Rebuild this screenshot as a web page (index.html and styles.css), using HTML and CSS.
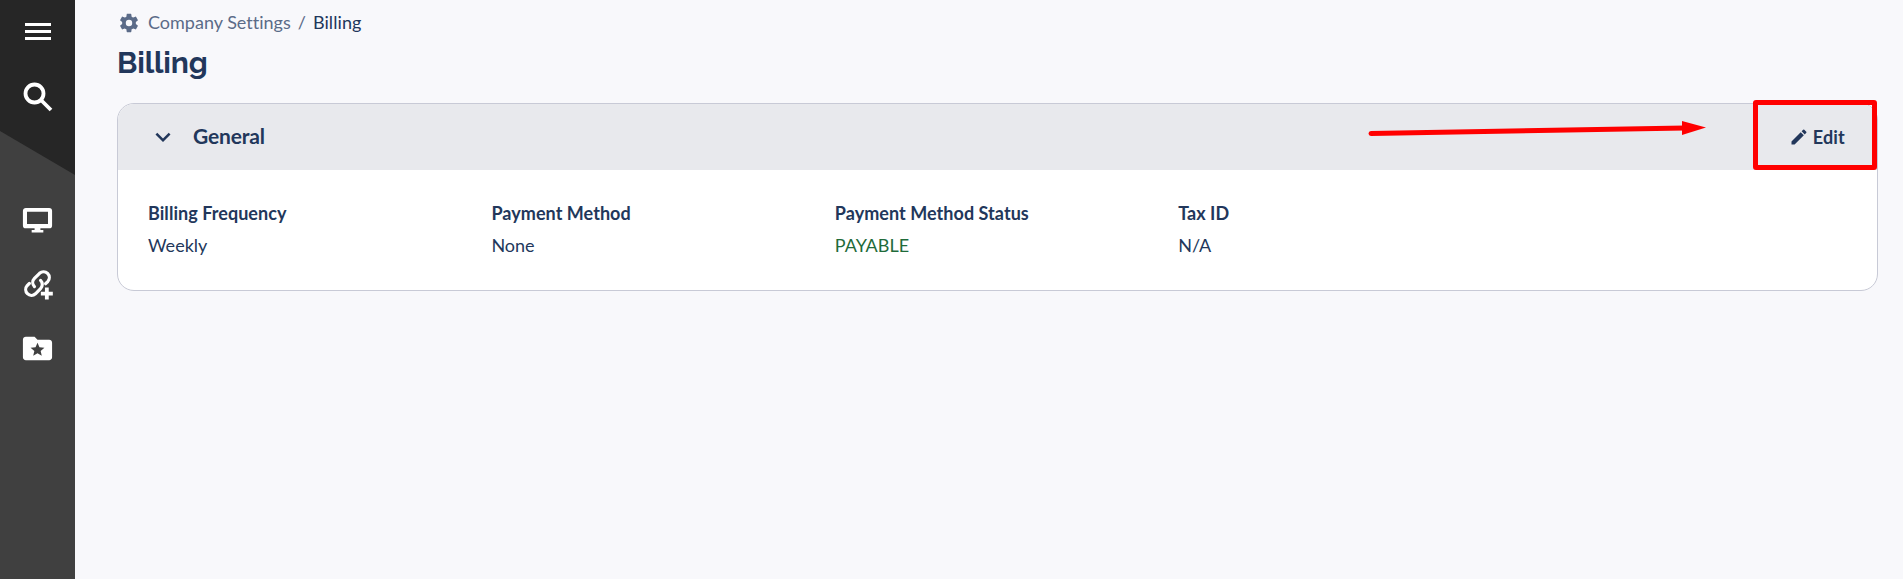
FILE: index.html
```html
<!DOCTYPE html>
<html lang="en">
<head>
    <meta charset="UTF-8">
    <meta name="viewport" content="width=device-width, initial-scale=1.0">
    <title>Billing</title>
    <link rel="stylesheet" href="styles.css">
</head>
<body>
    <nav class="sidebar">
        <div class="sidebar-top">
            <a class="nav-item menu" href="#" aria-label="Menu">
                <svg viewBox="0 0 34 34"><path d="M4 8h26v3H4zM4 15h26v3H4zM4 22h26v3H4z"/></svg>
            </a>
            <a class="nav-item search" href="#" aria-label="Search">
                <svg viewBox="0 0 30 30"><g fill="none" stroke="currentColor" stroke-width="3.8"><circle cx="11.500" cy="11.500" r="9"/><path d="M17.500 17.500l10.500 10.500"/></g></svg>
            </a>
        </div>
        <div class="sidebar-links">
            <a class="nav-item" href="#" aria-label="Dashboard">
                <svg viewBox="0 0 24 24"><path d="M4 2h16a2 2 0 0 1 2 2v10a2 2 0 0 1-2 2h-6v1.200h2v1.600H8v-1.600h2V16H4a2 2 0 0 1-2-2V4c0-1.100.9-2 2-2m.8 2.700v8.300h14.400V4.700z"/></svg>
            </a>
            <a class="nav-item" href="#" aria-label="Add link">
                <svg class="link" viewBox="0 0 24 24"><path d="M9.900 14.100a4 4 0 0 1 0-5.600l3.500-3.500a4 4 0 0 1 5.650 5.650l-1.500 1.500M14.100 9.900a4 4 0 0 1 0 5.650l-3.500 3.500a4 4 0 0 1-5.650-5.650l1.500-1.500"/><path class="plus" d="M18.400 14.800v8.200M14.300 18.900h8.200"/></svg>
            </a>
            <a class="nav-item" href="#" aria-label="Favorites">
                <svg viewBox="0 0 24 24"><path d="M20 6h-8l-2-2H4c-1.100 0-2 .9-2 2v12c0 1.100.9 2 2 2h16c1.100 0 2-.9 2-2V8c0-1.100-.9-2-2-2zm-5.060 11L12 15.280 9.060 17l.78-3.330-2.590-2.240 3.410-.29L12 8l1.340 3.140 3.410.29-2.590 2.240z"/></svg>
            </a>
        </div>
    </nav>

    <main class="content">
        <div class="breadcrumb">
            <svg class="gear" viewBox="0 0 24 24"><path d="M12 15.500A3.500 3.500 0 0 1 8.500 12 3.500 3.500 0 0 1 12 8.500a3.500 3.500 0 0 1 3.500 3.500 3.500 3.500 0 0 1-3.500 3.500m7.430-2.530c.040-.320.070-.640.070-.970s-.030-.660-.070-1l2.110-1.630c.190-.150.240-.420.120-.640l-2-3.460c-.120-.220-.390-.310-.610-.220l-2.490 1c-.520-.390-1.060-.730-1.690-.980l-.370-2.650A.506.506 0 0 0 14 2h-4c-.250 0-.460.180-.500.420l-.370 2.650c-.630.250-1.170.590-1.690.980l-2.490-1c-.220-.090-.490 0-.610.220l-2 3.460c-.130.220-.070.490.120.640L4.570 11c-.040.340-.070.670-.070 1s.030.650.070.970l-2.110 1.660c-.190.150-.250.420-.120.640l2 3.460c.120.220.390.300.610.220l2.490-1.010c.520.400 1.060.740 1.690.990l.370 2.650c.040.240.250.420.500.420h4c.250 0 .460-.180.500-.420l.370-2.650c.630-.260 1.170-.590 1.690-.990l2.490 1.010c.220.080.490 0 .610-.220l2-3.460c.120-.220.070-.490-.120-.640z"/></svg>
            <a href="#">Company Settings</a>
            <span class="separator">/</span>
            <span class="current">Billing</span>
        </div>
        <h1>Billing</h1>

        <section class="card">
            <div class="card-header">
                <svg class="chevron" viewBox="0 0 24 24"><path d="M7.410 8.590 12 13.170l4.590-4.580L18 10l-6 6-6-6z"/></svg>
                <h2>General</h2>
                <button class="edit">
                    <svg viewBox="0 0 24 24"><path d="M3 17.250V21h3.750L17.810 9.940l-3.750-3.750zM20.710 7.040a1 1 0 0 0 0-1.410l-2.340-2.340a1 1 0 0 0-1.410 0l-1.830 1.830 3.750 3.750z"/></svg>
                    Edit
                </button>
                <svg class="arrow" viewBox="0 0 340 20">
                    <line x1="4" y1="12.500" x2="318" y2="7"/>
                    <path d="M315 0 339 6.500 315 14z"/>
                </svg>
                <div class="highlight"></div>
            </div>
            <div class="card-body">
                <div class="field">
                    <div class="label">Billing Frequency</div>
                    <div>Weekly</div>
                </div>
                <div class="field">
                    <div class="label">Payment Method</div>
                    <div>None</div>
                </div>
                <div class="field">
                    <div class="label">Payment Method Status</div>
                    <div class="payable">PAYABLE</div>
                </div>
                <div class="field">
                    <div class="label">Tax ID</div>
                    <div>N/A</div>
                </div>
            </div>
        </section>
    </main>
</body>
</html>
```
FILE: styles.css
```css
* {
    box-sizing: border-box;
}

body {
    display: flex;
    min-height: 100vh;
    margin: 0;
    font-family: Lato, sans-serif;
    font-size: 18px;
    line-height: 24px;
    font-variant-ligatures: none;
    color: #22375b;
    background-color: #f8f8fb;
}

svg {
    display: block;
    fill: currentColor;
}

.sidebar {
    width: 75px;
    flex-shrink: 0;
    color: #fff;
    background-color: #404040;
}

.sidebar-top {
    height: 175px;
    padding-top: 15px;
    background-color: #262626;
    clip-path: polygon(0 0, 100% 0, 100% 100%, 0 131px);
}

.nav-item {
    display: flex;
    justify-content: center;
    color: inherit;
}

.nav-item svg {
    width: 34px;
    height: 34px;
}

.search {
    margin-top: 33px;
}

.search svg {
    width: 30px;
    height: 30px;
}

.sidebar-links {
    display: flex;
    flex-direction: column;
    gap: 29px;
    padding-top: 30px;
}

.sidebar-links svg {
    width: 35px;
    height: 35px;
}

.sidebar-links .link {
    margin-top: -3px;
    margin-bottom: 1px;
    fill: none;
    stroke: currentColor;
    stroke-width: 2.2;
    stroke-linecap: round;
}

.link .plus {
    stroke-width: 2.6;
    stroke-linecap: butt;
}

.content {
    flex: 1;
    padding: 10px 25px 0 42px;
}

.breadcrumb {
    display: flex;
    align-items: center;
    height: 24px;
    color: #5b6b88;
}

.gear {
    width: 22px;
    height: 22px;
    margin: 2px 8px 0 1px;
}

.breadcrumb a {
    color: inherit;
    text-decoration: none;
}

.separator {
    margin: 0 7px;
}

.current {
    color: #22375b;
    letter-spacing: 0.1px;
}

h1 {
    margin: 9px 0 20px;
    font-family: Raleway, Lato, sans-serif;
    font-size: 30px;
    font-weight: 700;
    line-height: 40px;
    letter-spacing: -0.2px;
}

.card {
    height: 188px;
    border: 1px solid #c8cad6;
    border-radius: 17px;
    background-color: #fff;
}

.card-header {
    position: relative;
    display: flex;
    align-items: center;
    height: 66px;
    padding: 0 32px 0 30px;
    border-radius: 16px 16px 0 0;
    background-color: #e8e9ed;
}

.chevron {
    width: 30px;
    height: 30px;
}

h2 {
    margin: -2px auto 0 15px;
    font-size: 21px;
    font-weight: 700;
    letter-spacing: -0.15px;
}

.edit {
    display: flex;
    align-items: center;
    gap: 4px;
    padding: 0;
    border: none;
    background: none;
    color: inherit;
    font: 700 18px Lato, sans-serif;
    letter-spacing: 0.2px;
}

.edit svg {
    width: 20px;
    height: 20px;
}

/* annotations drawn over the header */
.arrow {
    position: absolute;
    top: 17px;
    right: 170px;
    width: 340px;
    height: 20px;
    fill: #f00;
}

.arrow line {
    stroke: #f00;
    stroke-width: 5;
    stroke-linecap: round;
}

.highlight {
    position: absolute;
    top: -4px;
    right: 0;
    width: 124px;
    height: 70px;
    border: 5px solid #f00;
    border-radius: 3px;
}

.card-body {
    display: grid;
    grid-template-columns: repeat(5, 1fr);
    padding: 31px 12px 0 30px;
}

.label {
    margin-bottom: 8px;
    font-weight: 700;
    letter-spacing: 0.05px;
}

.payable {
    color: #1f6b3a;
}
```
